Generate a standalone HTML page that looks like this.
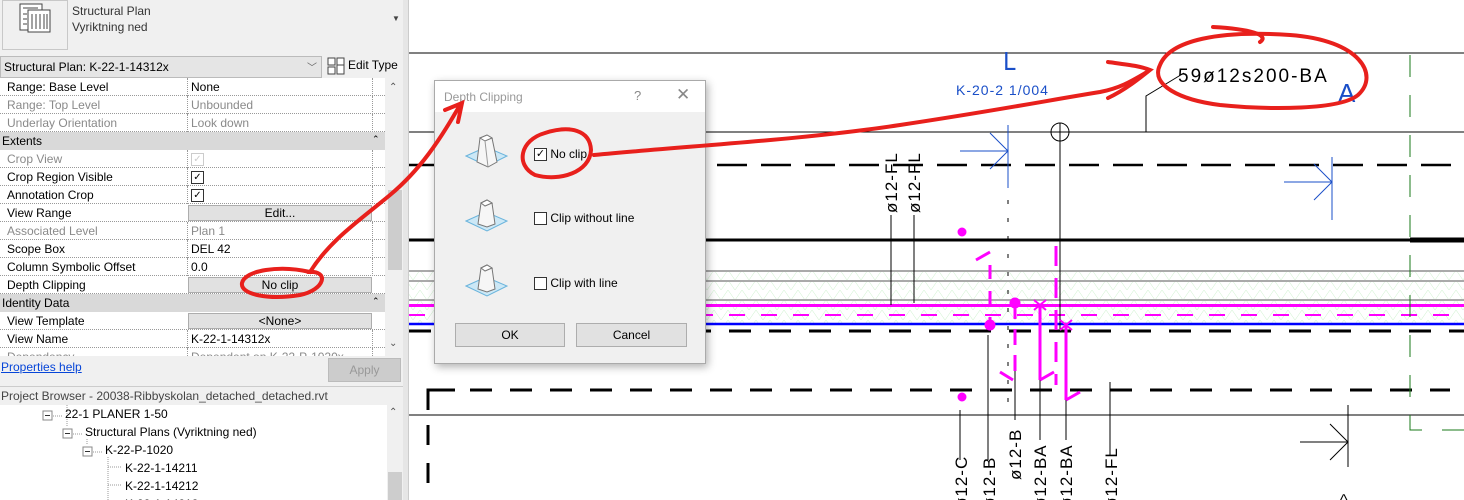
<!DOCTYPE html>
<html><head><meta charset="utf-8"><style>
*{box-sizing:border-box;margin:0;padding:0}
html,body{width:1464px;height:500px;overflow:hidden}
body{background:#fff;font-family:"Liberation Sans",sans-serif;font-size:12px;color:#000;position:relative}
.abs{position:absolute}
.row{position:absolute;left:0;width:385px;height:18px;border-bottom:1px dotted #999;background:#fff}
.row .n{position:absolute;left:7px;top:2px;white-space:nowrap}
.row .v{position:absolute;left:187px;top:0;width:186px;height:18px;border-left:1px dotted #999;border-right:1px dotted #999;padding:2px 3px;white-space:nowrap}
.g{color:#8a8a8a}
.hdr{position:absolute;left:0;width:385px;height:18px;background:#d9d9d9;padding:2px 2px}
.btn{position:absolute;left:188px;top:1px;width:184px;height:16px;background:#e1e1e1;border:1px solid #adadad;text-align:center;line-height:14px}
.cb{display:inline-block;width:13px;height:13px;border:1px solid #333;background:#fff;vertical-align:middle;position:relative}
.tree{position:absolute;white-space:nowrap;font-size:12px}
</style></head><body>
<div class="abs" style="left:0;top:0;width:409px;height:500px;background:#f0f0f0"></div>
<div class="abs" style="left:2px;top:0;width:66px;height:50px;border:1px solid #c8c8c8;background:#f0f0f0"></div>
<svg class="abs" style="left:18px;top:2px" width="34" height="32"><rect x="2" y="2" width="22" height="26" fill="#fff" stroke="#444"/><rect x="10" y="8" width="22" height="22" fill="#fff" stroke="#444"/><g stroke="#444"><line x1="5" y1="6" x2="20" y2="6"/><line x1="5" y1="12" x2="9" y2="12"/><line x1="5" y1="17" x2="9" y2="17"/><line x1="5" y1="22" x2="9" y2="22"/><line x1="14" y1="12" x2="14" y2="27"/><line x1="18" y1="12" x2="18" y2="27"/><line x1="22" y1="12" x2="22" y2="27"/><line x1="26" y1="12" x2="26" y2="27"/><line x1="29" y1="12" x2="29" y2="27"/></g></svg>
<div class="abs" style="left:72px;top:4px;color:#333">Structural Plan</div>
<div class="abs" style="left:72px;top:20px;color:#333">Vyriktning ned</div>
<div class="abs" style="left:392px;top:14px;font-size:8px;color:#444">▼</div>
<div class="abs" style="left:0;top:56px;width:322px;height:22px;background:#e5e5e5;border:1px solid #bbb;padding:3px 3px">Structural Plan: K-22-1-14312x</div>
<div class="abs" style="left:307px;top:59px;color:#666;font-size:10px">﹀</div>
<svg class="abs" style="left:327px;top:57px" width="18" height="18"><rect x="1" y="1" width="7" height="7" fill="#fff" stroke="#444"/><rect x="1" y="10" width="7" height="7" fill="#fff" stroke="#444"/><rect x="10" y="1" width="7" height="7" fill="#fff" stroke="#444"/><rect x="10" y="8" width="7" height="9" fill="#fff" stroke="#444"/></svg>
<div class="abs" style="left:348px;top:58px">Edit Type</div>
<div class="abs" style="left:0;top:78px;width:403px;height:278px;background:#fff;overflow:hidden">
<div class="row" style="top:0"><span class="n">Range: Base Level</span><span class="v">None</span></div>
<div class="row" style="top:18px"><span class="n g">Range: Top Level</span><span class="v g">Unbounded</span></div>
<div class="row" style="top:36px"><span class="n g">Underlay Orientation</span><span class="v g">Look down</span></div>
<div class="hdr" style="top:54px">Extents<span style="position:absolute;left:372px;font-size:9px">⌃</span></div>
<div class="row" style="top:72px"><span class="n g">Crop View</span><span class="v"><span class="cb" style="border-color:#ccc;color:#ccc;font-size:10px;line-height:11px;text-align:center">✓</span></span></div>
<div class="row" style="top:90px"><span class="n">Crop Region Visible</span><span class="v"><span class="cb" style="font-size:10px;line-height:11px;text-align:center">✓</span></span></div>
<div class="row" style="top:108px"><span class="n">Annotation Crop</span><span class="v"><span class="cb" style="font-size:10px;line-height:11px;text-align:center">✓</span></span></div>
<div class="row" style="top:126px"><span class="n">View Range</span><span class="btn">Edit...</span></div>
<div class="row" style="top:144px"><span class="n g">Associated Level</span><span class="v g">Plan 1</span></div>
<div class="row" style="top:162px"><span class="n">Scope Box</span><span class="v">DEL 42</span></div>
<div class="row" style="top:180px"><span class="n">Column Symbolic Offset</span><span class="v">0.0</span></div>
<div class="row" style="top:198px"><span class="n">Depth Clipping</span><span class="btn">No clip</span></div>
<div class="hdr" style="top:216px">Identity Data<span style="position:absolute;left:372px;font-size:9px">⌃</span></div>
<div class="row" style="top:234px"><span class="n">View Template</span><span class="btn">&lt;None&gt;</span></div>
<div class="row" style="top:252px"><span class="n">View Name</span><span class="v">K-22-1-14312x</span></div>
<div class="row" style="top:270px"><span class="n g">Dependency</span><span class="v g">Dependent on K-22-P-1020x</span></div>
<div class="abs" style="left:385px;top:0;width:18px;height:278px;background:#f0f0f0"></div>
<div class="abs" style="left:388px;top:112px;width:14px;height:80px;background:#cdcdcd"></div>
<div class="abs" style="left:389px;top:4px;font-size:10px;color:#555">⌃</div>
<div class="abs" style="left:389px;top:260px;font-size:10px;color:#555">⌄</div>
</div>
<div class="abs" style="left:1px;top:360px;color:#0645d8;text-decoration:underline">Properties help</div>
<div class="abs" style="left:328px;top:358px;width:73px;height:24px;background:#ccc;border:1px solid #bbb;color:#999;text-align:center;line-height:22px">Apply</div>
<div class="abs" style="left:0;top:386px;width:403px;height:1px;background:#ccc"></div>
<div class="abs" style="left:1px;top:389px;color:#444">Project Browser - 20038-Ribbyskolan_detached_detached.rvt</div>
<div class="abs" style="left:0;top:405px;width:387px;height:95px;background:#fff;overflow:hidden">
<svg class="abs" style="left:0;top:0" width="385" height="95"><g stroke="#999" stroke-dasharray="1,1" fill="none"><line x1="67" y1="0" x2="67" y2="22"/><line x1="53" y1="11" x2="62" y2="11"/><line x1="73" y1="29" x2="82" y2="29"/><line x1="87" y1="34" x2="87" y2="40"/><line x1="93" y1="47" x2="102" y2="47"/><line x1="108" y1="52" x2="108" y2="95"/><line x1="108" y1="62" x2="122" y2="62"/><line x1="108" y1="80" x2="122" y2="80"/></g><g fill="#fff" stroke="#888"><rect x="43" y="6" width="9" height="9"/><rect x="63" y="24" width="9" height="9"/><rect x="83" y="42" width="9" height="9"/></g><g stroke="#333"><line x1="45" y1="10.5" x2="50" y2="10.5"/><line x1="65" y1="28.5" x2="70" y2="28.5"/><line x1="85" y1="46.5" x2="90" y2="46.5"/></g></svg>
<div class="tree" style="left:65px;top:2px">22-1 PLANER 1-50</div>
<div class="tree" style="left:85px;top:20px">Structural Plans (Vyriktning ned)</div>
<div class="tree" style="left:105px;top:38px">K-22-P-1020</div>
<div class="tree" style="left:125px;top:56px">K-22-1-14211</div>
<div class="tree" style="left:125px;top:74px">K-22-1-14212</div>
<div class="tree" style="left:125px;top:92px">K-22-1-14213</div>
</div>
<div class="abs" style="left:388px;top:472px;width:14px;height:28px;background:#cdcdcd"></div>
<div class="abs" style="left:389px;top:407px;font-size:10px;color:#555">⌃</div>
<div class="abs" style="left:403px;top:0;width:6px;height:500px;background:#e6e6e6;border-right:1px solid #ccc"></div>

<svg class="abs" style="left:0;top:0" width="1464" height="500">
<defs><pattern id="hx" width="14" height="10" patternUnits="userSpaceOnUse"><path d="M0 0L7 10L14 0" stroke="#c8efc8" stroke-width="0.5" fill="none"/></pattern></defs>
<g stroke="#000">
<line x1="409" y1="53" x2="1464" y2="53"/>
<line x1="409" y1="132" x2="1464" y2="132"/>
<line x1="409" y1="415" x2="1464" y2="415"/>
<line x1="409" y1="165" x2="1464" y2="165" stroke-width="2.5" stroke-dasharray="30,14"/>
<line x1="409" y1="240" x2="1464" y2="240" stroke-width="3"/>
<line x1="1410" y1="240" x2="1464" y2="240" stroke-width="5"/>
<line x1="409" y1="331" x2="1464" y2="331" stroke-width="3" stroke-dasharray="22,18"/>
<path d="M428 410V390H455" stroke-width="3" fill="none"/>
<line x1="470" y1="390" x2="1450" y2="390" stroke-width="3" stroke-dasharray="22,18"/>
<line x1="428" y1="425" x2="428" y2="500" stroke-width="3" stroke-dasharray="20,18"/>
</g>
<rect x="409" y="272" width="1055" height="38" fill="url(#hx)"/>
<rect x="409" y="310" width="1055" height="14" fill="url(#hx)"/>
<g stroke="#aaa" stroke-width="2"><line x1="409" y1="271" x2="1464" y2="271"/><line x1="409" y1="281" x2="1464" y2="281"/><line x1="409" y1="300" x2="1464" y2="300"/></g>
<line x1="409" y1="305.5" x2="1464" y2="305.5" stroke="#f0f" stroke-width="3"/>
<line x1="409" y1="315" x2="1464" y2="315" stroke="#f0f" stroke-width="2" stroke-dasharray="16,16"/>
<line x1="409" y1="324" x2="1464" y2="324" stroke="#00f" stroke-width="2.5"/>
<line x1="1410" y1="55" x2="1410" y2="430" stroke="#1a7a1a" stroke-dasharray="22,18"/>
<path d="M1410 415V430H1422M1442 430H1464" stroke="#1a7a1a" fill="none"/>
<g stroke="#1a4fc8" fill="none"><line x1="1008" y1="125" x2="1008" y2="188"/><line x1="960" y1="151" x2="1008" y2="151"/><path d="M990 133L1008 151L990 169"/><line x1="1332" y1="157" x2="1332" y2="220"/><line x1="1284" y1="182" x2="1332" y2="182"/><path d="M1314 164L1332 182L1314 200"/></g>
<text x="1003" y="70" fill="#1a4fc8" font-size="25" font-family="DejaVu Sans Condensed, DejaVu Sans">L</text>
<text x="956" y="95" fill="#1a4fc8" font-size="14" font-family="Liberation Sans" letter-spacing="1">K-20-2 1/004</text>
<text x="1338" y="102" fill="#1a4fc8" font-size="26" font-family="Liberation Sans">A</text>
<text x="1178" y="82" fill="#000" font-size="19" font-family="Liberation Sans" letter-spacing="2">59ø12s200-BA</text>
<path d="M1184 73L1146 96V132" stroke="#000" fill="none"/>
<circle cx="1060" cy="132" r="9" fill="none" stroke="#000"/>
<line x1="1060" y1="123" x2="1060" y2="330" stroke="#000"/>
<g stroke="#000"><line x1="891" y1="215" x2="891" y2="305"/><line x1="914" y1="215" x2="914" y2="303"/>
<line x1="1008" y1="200" x2="1008" y2="410" stroke-dasharray="4,14"/>
<line x1="960" y1="410" x2="960" y2="460"/><line x1="988" y1="335" x2="988" y2="460"/><line x1="1015" y1="365" x2="1015" y2="420"/><line x1="1040" y1="380" x2="1040" y2="440"/><line x1="1066" y1="400" x2="1066" y2="440"/><line x1="1110" y1="382" x2="1110" y2="455"/>
<line x1="1348" y1="405" x2="1348" y2="467"/><line x1="1300" y1="442" x2="1348" y2="442"/><path d="M1330 424L1348 442L1330 460" fill="none"/></g>
<g font-family="Liberation Sans" font-size="17" fill="#000" letter-spacing="1">
<text transform="translate(897,213) rotate(-90)">ø12-FL</text>
<text transform="translate(920,213) rotate(-90)">ø12-FL</text>
<text transform="translate(967,508) rotate(-90)">ø12-C</text>
<text transform="translate(995,508) rotate(-90)">ø12-B</text>
<text transform="translate(1021,480) rotate(-90)">ø12-B</text>
<text transform="translate(1046,508) rotate(-90)">ø12-BA</text>
<text transform="translate(1072,508) rotate(-90)">ø12-BA</text>
<text transform="translate(1117,508) rotate(-90)">ø12-FL</text>
<text x="1340" y="505" font-size="16">^</text></g>
<g fill="#f0f" stroke="#f0f"><circle cx="962" cy="232" r="4"/><circle cx="962" cy="397" r="4"/><circle cx="990" cy="325" r="5"/><circle cx="1015" cy="303" r="5"/>
<line x1="976" y1="260" x2="990" y2="252" stroke-width="3"/><line x1="990" y1="265" x2="990" y2="325" stroke-width="3" stroke-dasharray="14,12"/>
<line x1="1015" y1="303" x2="1015" y2="380" stroke-width="3" stroke-dasharray="16,10"/><line x1="1000" y1="372" x2="1013" y2="380" stroke-width="3"/>
<line x1="1040" y1="305" x2="1040" y2="380" stroke-width="3"/><line x1="1040" y1="380" x2="1054" y2="372" stroke-width="3"/>
<line x1="1056" y1="246" x2="1056" y2="385" stroke-width="3" stroke-dasharray="20,12"/>
<line x1="1066" y1="323" x2="1066" y2="400" stroke-width="3"/><line x1="1066" y1="400" x2="1080" y2="392" stroke-width="3"/>
<path d="M1034 300l12 10M1046 300l-12 10M1060 320l12 10M1072 320l-12 10" stroke-width="2" fill="none"/></g>
</svg>

<div class="abs" style="left:434px;top:80px;width:272px;height:284px;background:#f0f0f0;border:1px solid #aaa;box-shadow:2px 3px 8px rgba(0,0,0,.3)">
<div class="abs" style="left:0;top:0;width:270px;height:31px;background:#fff"></div>
<div class="abs" style="left:9px;top:9px;color:#999;font-size:12px">Depth Clipping</div>
<div class="abs" style="left:199px;top:7px;color:#888;font-size:13px">?</div>
<div class="abs" style="left:241px;top:4px;color:#888;font-size:17px">✕</div>
<svg class="abs" style="left:30px;top:50px" width="45" height="230">
<g><path d="M1 25L21 16L42 25L22 35Z" fill="#cce8f6" stroke="#6ab4dc"/><path d="M12 31L15 7L22 4L27 7L32 31L23 36Z" fill="#f6f6f6" stroke="#777"/><path d="M15 7L22 4L27 7L20 10Z" fill="#fff" stroke="#777"/><line x1="20" y1="10" x2="23" y2="36" stroke="#999"/></g>
<g transform="translate(0,65)"><path d="M1 25L21 16L42 25L22 35Z" fill="#cce8f6" stroke="#6ab4dc"/><path d="M13 28L16 7L22 4L27 7L30 28L22 31Z" fill="#f6f6f6" stroke="#777"/><path d="M16 7L22 4L27 7L20 10Z" fill="#fff" stroke="#777"/></g>
<g transform="translate(0,130)"><path d="M1 25L21 16L42 25L22 35Z" fill="#cce8f6" stroke="#6ab4dc"/><path d="M13 28L16 7L22 4L27 7L30 28L22 31Z" fill="#f6f6f6" stroke="#777"/><path d="M16 7L22 4L27 7L20 10Z" fill="#fff" stroke="#777"/></g>
</svg>
<div class="abs" style="left:99px;top:66px"><span class="cb" style="font-size:11px;line-height:11px;text-align:center">✓</span> No clip</div>
<div class="abs" style="left:99px;top:130px"><span class="cb"></span> Clip without line</div>
<div class="abs" style="left:99px;top:195px"><span class="cb"></span> Clip with line</div>
<div class="abs" style="left:20px;top:242px;width:110px;height:24px;background:#e1e1e1;border:1px solid #adadad;text-align:center;line-height:22px">OK</div>
<div class="abs" style="left:141px;top:242px;width:111px;height:24px;background:#e1e1e1;border:1px solid #adadad;text-align:center;line-height:22px">Cancel</div>
</div>

<svg class="abs" style="left:0;top:0" width="1464" height="500"><g stroke="#e8201c" stroke-width="4" fill="none" stroke-linecap="round">
<path d="M308 272C330 270 325 290 300 295C270 300 240 295 242 283C245 270 280 265 310 272C330 240 360 220 390 195C420 170 440 140 460 105"/>
<path d="M445 110L462 103L458 122"/>
<path d="M545 133C520 140 515 165 535 175C560 182 590 172 591 150C590 130 570 125 545 133M594 155C700 145 800 140 900 125C1000 110 1050 100 1100 92C1120 88 1130 82 1147 72"/>
<path d="M1108 62C1130 65 1140 66 1150 70C1140 78 1125 90 1108 98"/>
<path d="M1160 65C1170 40 1220 30 1290 35C1360 40 1380 75 1358 95C1340 110 1270 110 1220 105C1180 100 1150 85 1160 65"/>
<path d="M1213 27C1250 29 1270 35 1260 42"/>
</g></svg>
</body></html>
